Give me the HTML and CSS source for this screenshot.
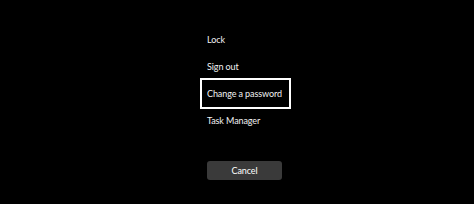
FILE: index.html
```html
<!DOCTYPE html>
<html>
<head>
  <title>Security options</title>
  <link rel="stylesheet" href="styles.css">
</head>
<body>
  <div class="screen">
    <div class="options">
      <div class="option">Lock</div>
      <div class="option">Sign out</div>
      <div class="option focused">Change a password</div>
      <div class="option">Task Manager</div>
    </div>
    <button class="cancel">Cancel</button>
  </div>
</body>
</html>
```

FILE: styles.css
```css
body {
  margin: 0;
  background: #000000;
  color: #FFFFFF;
  font-family: Lato, 'Noto Sans', sans-serif;
  font-size: 9px;
  letter-spacing: -0.1px;
}

.screen {
  width: 474px;
  height: 204px;
  display: flex;
  flex-direction: column;
  padding: 26px 0 0 202px;
  box-sizing: border-box;
}

.options {
  display: flex;
  flex-direction: column;
  width: 87px;
}

.option {
  height: 27px;
  display: flex;
  align-items: center;
  padding: 0 5px;
  color: #F2F2F2;
  white-space: nowrap;
}

.option.focused {
  outline: 2px solid #FFFFFF;
  outline-offset: 0;
}

.cancel {
  margin: 27px 0 0 5px;
  width: 75px;
  height: 19px;
  padding: 0;
  border: none;
  border-radius: 3px;
  background: #3A3A3A;
  color: #FFFFFF;
  font-family: inherit;
  font-size: 9px;
  letter-spacing: inherit;
}
```
